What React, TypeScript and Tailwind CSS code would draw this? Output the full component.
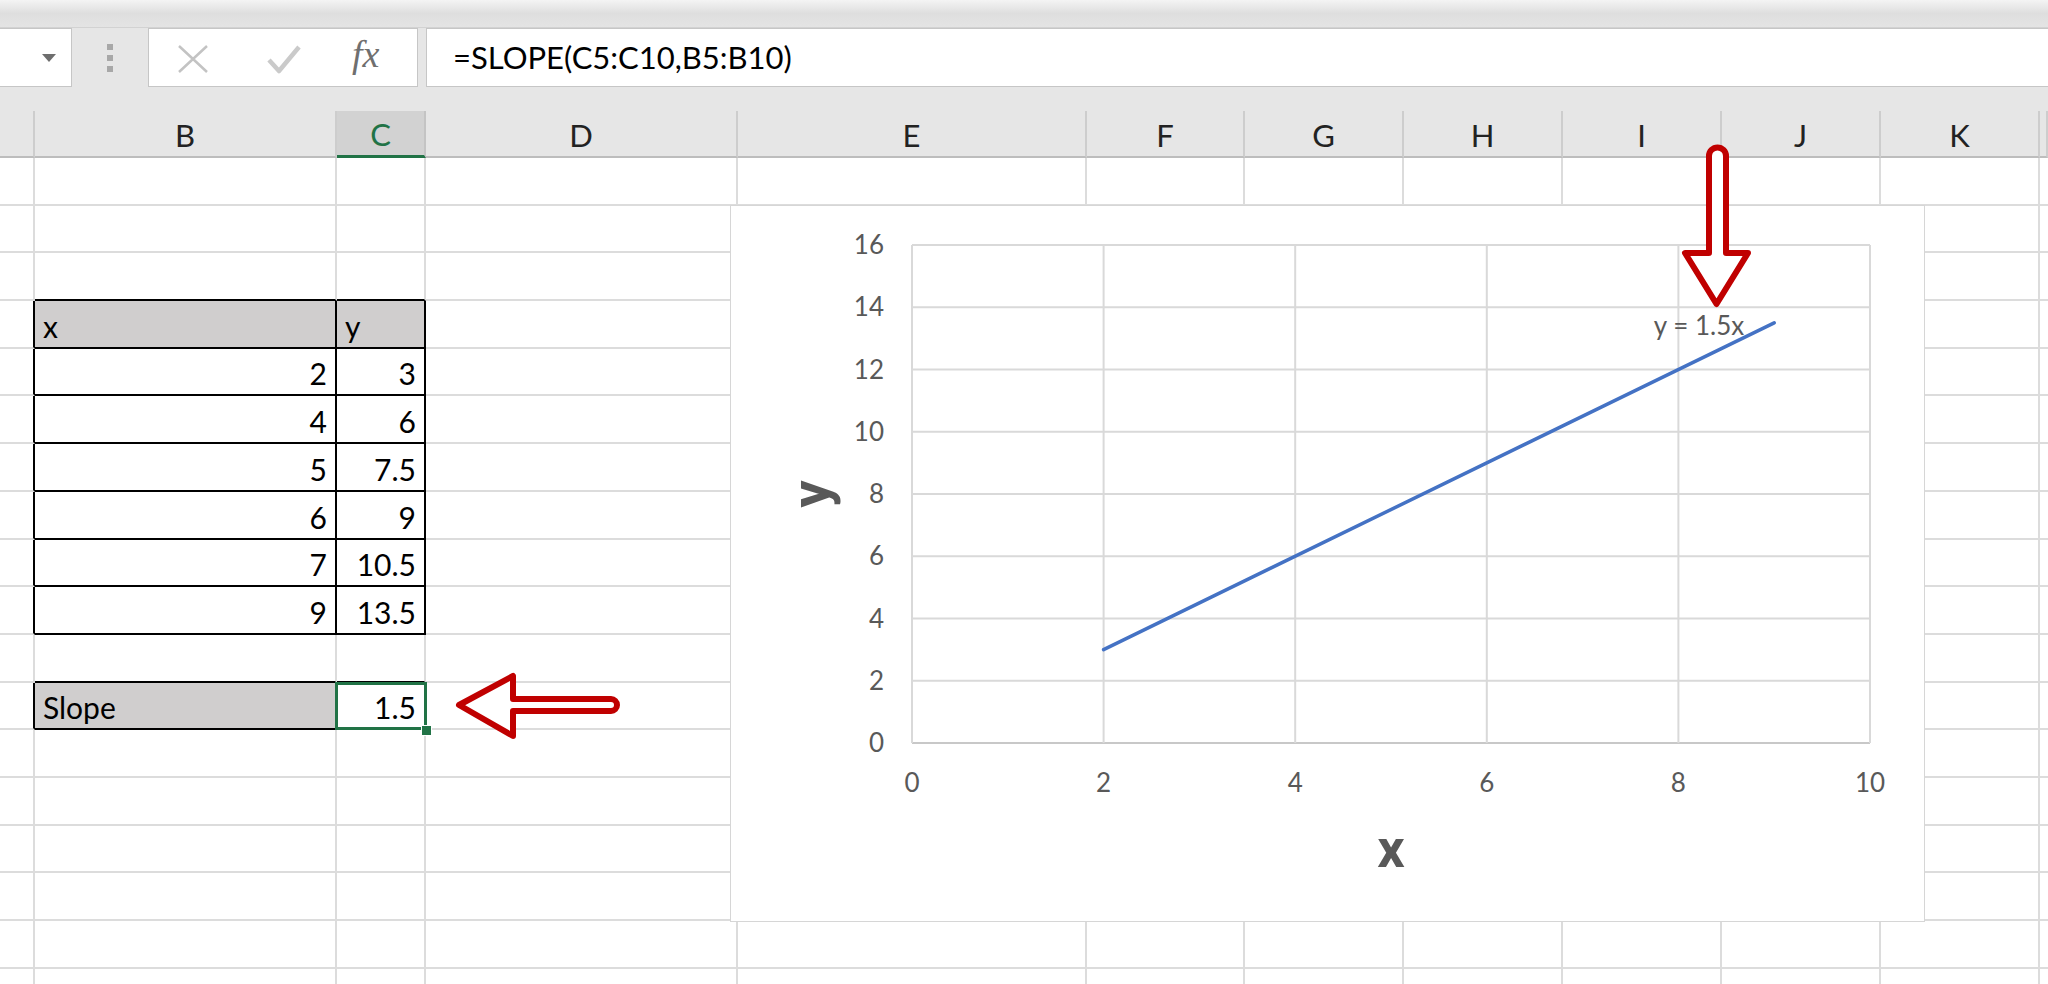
import React from 'react';

const COLS = [35, 302, 89, 312, 349, 158, 159, 159, 159, 159, 159, 8];
const LETTERS = ['', 'B', 'C', 'D', 'E', 'F', 'G', 'H', 'I', 'J', 'K', ''];
const NROWS = 18;

type CellData = { text: string; align: 'left' | 'right'; fill?: boolean };

const DATA: Record<string, CellData> = {
  '4-1': { text: 'x', align: 'left', fill: true },
  '4-2': { text: 'y', align: 'left', fill: true },
  '5-1': { text: '2', align: 'right' },
  '5-2': { text: '3', align: 'right' },
  '6-1': { text: '4', align: 'right' },
  '6-2': { text: '6', align: 'right' },
  '7-1': { text: '5', align: 'right' },
  '7-2': { text: '7.5', align: 'right' },
  '8-1': { text: '6', align: 'right' },
  '8-2': { text: '9', align: 'right' },
  '9-1': { text: '7', align: 'right' },
  '9-2': { text: '10.5', align: 'right' },
  '10-1': { text: '9', align: 'right' },
  '10-2': { text: '13.5', align: 'right' },
  '12-1': { text: 'Slope', align: 'left', fill: true },
  '12-2': { text: '1.5', align: 'right' },
};

function isTableRow(r: number) {
  return (r >= 4 && r <= 10) || r === 12;
}

function Cell({ r, c }: { r: number; c: number }) {
  const d = DATA[`${r}-${c}`];
  const blackRight = isTableRow(r) && c <= 2;
  const blackBottom = c >= 1 && c <= 2 && ((r >= 3 && r <= 10) || r === 11 || r === 12);
  const selected = r === 12 && c === 2;
  return (
    <div
      className={[
        'relative flex items-end border-r-2 border-b-2 pb-[3px] px-[8px] text-[30px] leading-[1.2] text-black',
        blackRight ? 'border-r-black' : 'border-r-[#dcdcdc]',
        blackBottom ? 'border-b-black' : 'border-b-[#dcdcdc]',
        d && d.fill ? 'bg-[#d0cece]' : '',
        d && d.align === 'right' ? 'justify-end' : 'justify-start',
      ].join(' ')}
    >
      {d ? <span className="whitespace-nowrap">{d.text}</span> : null}
      {selected ? (
        <>
          <div className="absolute -left-[2px] -top-[1px] -right-[3px] -bottom-[2px] border-[3px] border-[#217346] z-10" />
          <div className="absolute -right-[8px] -bottom-[8px] w-[11px] h-[11px] bg-[#217346] border border-white z-20" />
        </>
      ) : null}
    </div>
  );
}

function Chart() {
  const W = 1193;
  const H = 715;
  const pl = 181;
  const pt = 39;
  const pw = 958;
  const ph = 498;
  const X = (v: number) => pl + (v / 10) * pw;
  const Y = (v: number) => pt + ph - (v / 16) * ph;
  const xs = [0, 2, 4, 6, 8, 10];
  const ys = [0, 2, 4, 6, 8, 10, 12, 14, 16];
  return (
    <svg width={W} height={H} viewBox={`0 0 ${W} ${H}`} className="block">
      {ys.map((v) => (
        <line key={'h' + v} x1={pl} x2={pl + pw} y1={Y(v)} y2={Y(v)} stroke={v === 0 ? '#c8c8c8' : '#d9d9d9'} strokeWidth={2} />
      ))}
      {xs.map((v) => (
        <line key={'v' + v} x1={X(v)} x2={X(v)} y1={pt} y2={pt + ph} stroke="#d9d9d9" strokeWidth={2} />
      ))}
      <line x1={X(2)} y1={Y(3)} x2={X(9)} y2={Y(13.5)} stroke="#4472c4" strokeWidth={3.5} strokeLinecap="round" />
      {ys.map((v) => (
        <text key={'yl' + v} x={153} y={Y(v) + 9} textAnchor="end" fontFamily="Lato, sans-serif" fontSize={26} fill="#595959">
          {v}
        </text>
      ))}
      {xs.map((v) => (
        <text key={'xl' + v} x={X(v)} y={586} textAnchor="middle" fontFamily="Lato, sans-serif" fontSize={26} fill="#595959">
          {v}
        </text>
      ))}
      <text x={968} y={129} textAnchor="middle" fontFamily="Lato, sans-serif" fontSize={26} fill="#595959">
        y = 1.5x
      </text>
      <text x={660} y={661} textAnchor="middle" fontFamily="Roboto, sans-serif" fontWeight={700} fontSize={54} fill="#595959">
        x
      </text>
      <text
        x={98}
        y={288}
        textAnchor="middle"
        transform="rotate(-90 98 288)"
        fontFamily="Roboto, sans-serif"
        fontWeight={700}
        fontSize={54}
        fill="#595959"
      >
        y
      </text>
    </svg>
  );
}

function Arrows() {
  return (
    <svg width={2048} height={984} viewBox="0 0 2048 984" className="absolute left-0 top-0 pointer-events-none z-30">
      <path
        d="M1709,253 L1709,156 A8.5,8.5 0 0 1 1726,156 L1726,253 L1748,253 L1716.5,304 L1685,253 Z"
        fill="#ffffff"
        stroke="#c00000"
        strokeWidth={6}
        strokeLinejoin="round"
      />
      <path
        d="M459,705 L513,676 L513,699 L611,699 A6,6 0 0 1 611,711 L513,711 L513,736 Z"
        fill="#ffffff"
        stroke="#c00000"
        strokeWidth={6}
        strokeLinejoin="round"
      />
    </svg>
  );
}

export default function App() {
  const rows = Array.from({ length: NROWS }, (_, i) => i + 1);
  return (
    <div className="relative w-[2048px] h-[984px] overflow-hidden bg-white font-['Lato',sans-serif]">
      {/* ribbon bottom edge */}
      <div className="h-[28px] bg-gradient-to-b from-[#f4f4f4] via-[#dedede] to-[#e4e4e4] border-b border-[#d2d2d2]" />

      {/* formula bar */}
      <div className="h-[83px] bg-[#e6e6e6] pb-[24px]">
        <div className="flex h-[59px] items-stretch">
          <div className="relative w-[72px] bg-white border border-l-0 border-[#c6c6c6]">
            <svg width="14" height="8" viewBox="0 0 14 8" className="absolute left-[42px] top-[25px]">
              <path d="M0,0 L14,0 L7,8 Z" fill="#6e6e6e" />
            </svg>
          </div>
          <div className="ml-[35px] flex flex-col justify-center gap-[5px] w-[6px]">
            <div className="w-[6px] h-[6px] bg-[#a8a8a8]" />
            <div className="w-[6px] h-[6px] bg-[#a8a8a8]" />
            <div className="w-[6px] h-[6px] bg-[#a8a8a8]" />
          </div>
          <div className="ml-[35px] relative w-[270px] bg-white border border-[#c6c6c6] flex items-center">
            <svg width="32" height="30" viewBox="0 0 32 30" className="absolute left-[28px] top-[15px]">
              <path d="M2,2 L30,28 M30,2 L2,28" stroke="#c3c3c3" strokeWidth={2.5} fill="none" />
            </svg>
            <svg width="34" height="30" viewBox="0 0 34 30" className="absolute left-[118px] top-[15px]">
              <path d="M2,16 L12,27 L32,3" stroke="#cacaca" strokeWidth={4.5} fill="none" strokeLinejoin="round" />
            </svg>
            <span className="absolute left-[203px] top-[3px] text-[38px] leading-[1.2] italic text-[#6f6f6f] font-['Liberation_Serif',serif]">
              fx
            </span>
          </div>
          <div className="ml-[8px] flex-1 bg-white border border-r-0 border-[#c6c6c6] flex items-center pl-[26px]">
            <span className="text-[31px] leading-none text-black whitespace-nowrap">=SLOPE(C5:C10,B5:B10)</span>
          </div>
        </div>
      </div>

      {/* column headers */}
      <div className="grid grid-cols-[35px_302px_89px_312px_349px_158px_159px_159px_159px_159px_159px_8px] h-[47px] bg-[#e6e6e6]">
        {COLS.map((_, i) => {
          const sel = i === 2;
          return (
            <div
              key={i}
              className={[
                'flex items-center justify-center text-[31px] leading-none pt-[3px] border-r-2',
                sel
                  ? 'bg-[#d2d2d2] border-r-[#c4c4c4] border-b-[3px] border-b-[#217346] text-[#217346]'
                  : 'border-r-[#cdcdcd] border-b-2 border-b-[#bdbdbd] text-[#222222]',
              ].join(' ')}
            >
              {LETTERS[i]}
            </div>
          );
        })}
      </div>

      {/* grid body */}
      <div className="grid grid-cols-[35px_302px_89px_312px_349px_158px_159px_159px_159px_159px_159px_8px] auto-rows-[47.7px]">
        {rows.map((r) => COLS.map((_, c) => <Cell key={`${r}-${c}`} r={r} c={c} />))}
      </div>

      {/* chart */}
      <div className="absolute left-[730px] top-[205px] w-[1195px] h-[717px] bg-white border border-[#d6d6d6] z-20">
        <Chart />
      </div>

      <Arrows />
    </div>
  );
}
